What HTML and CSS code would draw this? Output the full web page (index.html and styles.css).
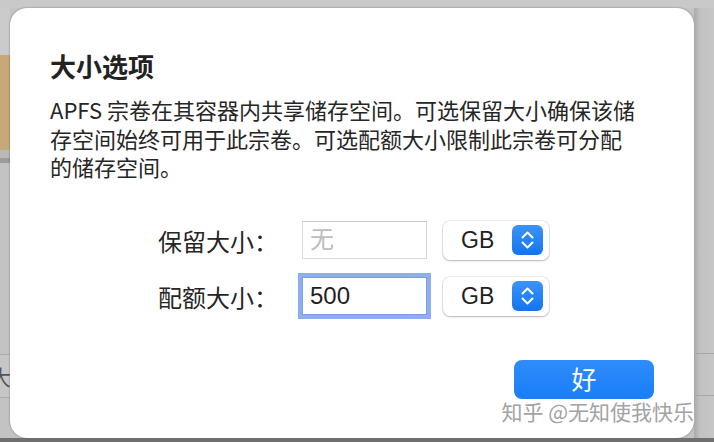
FILE: index.html
```html
<!DOCTYPE html>
<html lang="zh-CN">
<head>
	<meta charset="UTF-8">
	<title>大小选项</title>
	<link rel="stylesheet" href="styles.css">
</head>
<body>
	<div class="screen">
		<div class="topbar"></div>
		<div class="middle">
			<div class="side left">
				<div class="l-top"></div>
				<div class="l-tan"></div>
				<div class="l-band"></div>
				<div class="l-line"></div>
				<div class="l-grey"></div>
				<div class="l-row"><span>大</span></div>
				<div class="l-grey2"></div>
			</div>
			<div class="dialog">
				<div class="title">大小选项</div>
				<div class="desc">APFS 宗卷在其容器内共享储存空间。可选保留大小确保该储存空间始终可用于此宗卷。可选配额大小限制此宗卷可分配的储存空间。</div>
				<div class="form">
					<div class="row">
						<div class="label">保留大小：</div>
						<input class="field" type="text" placeholder="无">
						<div class="select">
							<span>GB</span>
							<svg class="stepper" width="31" height="30" viewBox="0 0 31 30">
								<defs>
									<linearGradient id="sg1" x1="0" y1="0" x2="0" y2="1">
										<stop offset="0" stop-color="#3b94fa"/>
										<stop offset="1" stop-color="#1474f2"/>
									</linearGradient>
								</defs>
								<rect width="31" height="30" rx="6" fill="url(#sg1)"/>
								<path d="M10.5 12.5 L15.5 7.5 L20.5 12.5 M10.5 17.5 L15.5 22.5 L20.5 17.5" fill="none" stroke="#fff" stroke-width="2" stroke-linecap="round" stroke-linejoin="round"/>
							</svg>
						</div>
					</div>
					<div class="row">
						<div class="label">配额大小：</div>
						<input class="field focus" type="text" value="500">
						<div class="select">
							<span>GB</span>
							<svg class="stepper" width="31" height="30" viewBox="0 0 31 30">
								<rect width="31" height="30" rx="6" fill="url(#sg1)"/>
								<path d="M10.5 12.5 L15.5 7.5 L20.5 12.5 M10.5 17.5 L15.5 22.5 L20.5 17.5" fill="none" stroke="#fff" stroke-width="2" stroke-linecap="round" stroke-linejoin="round"/>
							</svg>
						</div>
					</div>
				</div>
				<div class="footer">
					<div class="btn">好</div>
				</div>
			</div>
			<div class="side right">
				<div class="r-top"></div>
				<div class="r-row"></div>
				<div class="r-bottom"></div>
			</div>
		</div>
		<div class="bottombar"></div>
	</div>
	<div class="watermark">知乎 @无知使我快乐</div>
</body>
</html>
```

FILE: styles.css
```css
*{
	box-sizing: border-box;
}
body{
	margin: 0;
	width: 714px;
	height: 442px;
	overflow: hidden;
	position: relative;
	font-family: "Noto Sans CJK SC", "Liberation Sans", sans-serif;
	color: #262626;
	background: #c4c4c4;
}
.screen{
	display: flex;
	flex-direction: column;
	height: 442px;
}
.topbar{
	height: 8px;
	background: #c9c9c9;
}
.middle{
	display: flex;
	height: 430px;
}
.bottombar{
	flex: 1;
	background: #6f6f6f;
}
.side{
	display: flex;
	flex-direction: column;
}
.left{
	width: 10px;
}
.l-top{
	height: 47px;
	background: #cbcbcb;
}
.l-tan{
	height: 95px;
	background: #c7a877;
}
.l-band{
	height: 8px;
	background: #b9b9b9;
}
.l-line{
	height: 5px;
	background: #9c9c9c;
}
.l-grey{
	height: 192px;
	background: #c3c3c3;
	border-bottom: 1px solid #a9a9a9;
}
.l-row{
	height: 43px;
	overflow: hidden;
	border-bottom: 1px solid #a9a9a9;
	background: #c6c6c6;
	font-size: 21px;
	line-height: 43px;
	color: #555;
	white-space: nowrap;
}
.l-row span{
	margin-left: -10px;
}
.l-grey2{
	flex: 1;
	background: #c3c3c3;
}
.right{
	flex: 1;
	background: linear-gradient(to right, #a9a9a9, #c2c2c2 6px, #c6c6c6);
}
.r-top{
	height: 346px;
	border-bottom: 1px solid #a6a6a6;
}
.r-row{
	height: 42px;
	border-bottom: 1px solid #a6a6a6;
}
.r-bottom{
	flex: 1;
}
.dialog{
	width: 684px;
	height: 430px;
	background: #fff;
	border-radius: 17px;
	box-shadow: 0 0 2px rgba(0,0,0,0.45);
	padding: 41px 40px 39px 40px;
	display: flex;
	flex-direction: column;
}
.title{
	font-size: 26px;
	line-height: 34px;
	font-weight: bold;
	color: #222;
}
.desc{
	margin-top: 12px;
	width: 588px;
	font-size: 22px;
	line-height: 28.5px;
}
.form{
	margin-top: 40px;
	padding-left: 108px;
	display: flex;
	flex-direction: column;
	gap: 17px;
}
.row{
	display: flex;
	align-items: center;
	height: 39px;
}
.label{
	width: 144px;
	font-size: 24px;
}
.field{
	width: 125px;
	height: 38px;
	border: 1px solid #d9d9d9;
	border-top-color: #cbcbcb;
	padding: 0 0 0 7px;
	font-family: "Liberation Sans", "Noto Sans CJK SC", sans-serif;
	font-size: 24px;
	color: #1e1e1e;
	outline: none;
	background: #fff;
}
.field::placeholder{
	color: #bdbdbd;
}
.field.focus{
	box-shadow: 0 0 0 4px #8eaef0;
	border-color: #7c9fe8;
}
.select{
	margin-left: 16px;
	width: 106px;
	height: 39px;
	border-radius: 7px;
	background: #fff;
	box-shadow: 0 0 0 1px rgba(0,0,0,0.07), 0 1px 2px rgba(0,0,0,0.22);
	display: flex;
	align-items: center;
	justify-content: space-between;
	padding: 0 6px 0 18px;
	font-family: "Liberation Sans", sans-serif;
	font-size: 23px;
	color: #1e1e1e;
}
.stepper{
	display: block;
}
.footer{
	margin-top: auto;
	display: flex;
	justify-content: flex-end;
}
.btn{
	width: 140px;
	height: 39px;
	border-radius: 8px;
	background: linear-gradient(#2f8cfb, #1a7ef8);
	color: #fff;
	font-size: 25px;
	line-height: 36px;
	text-align: center;
}
.watermark{
	position: absolute;
	right: 20px;
	top: 399px;
	font-size: 21px;
	line-height: 24px;
	color: #a3a3a3;
	text-shadow: 1px 1px 0 #fff, -1px -1px 0 #fff, 1px -1px 0 #fff, -1px 1px 0 #fff;
	white-space: nowrap;
}
```
